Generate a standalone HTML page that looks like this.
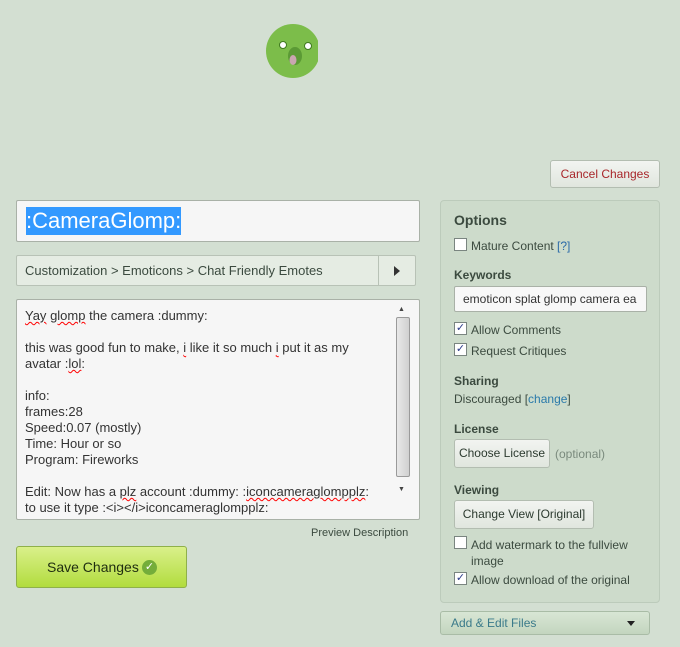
<!DOCTYPE html>
<html><head><style>
body{margin:0;width:680px;height:647px;background:#d3dfd2;font-family:"Liberation Sans",sans-serif;font-size:12px;color:#3b4a3f;position:relative;overflow:hidden}
.a{position:absolute}
.btn{position:absolute;background:linear-gradient(#f2f4f1,#e0e6de);border:1px solid #b3bdb1;border-radius:3px;font-size:12px;color:#2c3a2f;box-sizing:border-box}
.cb{position:absolute;width:11px;height:11px;border:1px solid #7a8580;background:#fff;font-size:11px;line-height:11px;text-align:center;color:#2a3a8a}
.h{position:absolute;font-weight:bold;font-size:12px;color:#3b4a3f}
.sq{text-decoration:underline wavy red;text-decoration-thickness:1px}
</style></head><body>
<svg class="a" style="left:266px;top:24px" width="52" height="54" viewBox="0 0 52 54">
<ellipse cx="27" cy="27" rx="27" ry="27" fill="#7cbd4a"/><rect x="52" y="0" width="4" height="54" fill="#d3dfd2"/>
<circle cx="17" cy="21" r="3.5" fill="#fff" stroke="#3f7a1f"/><circle cx="42" cy="22" r="3.5" fill="#fff" stroke="#3f7a1f"/>
<ellipse cx="29" cy="32" rx="7" ry="9" fill="#5b9a35"/><ellipse cx="27" cy="36" rx="3.5" ry="5" fill="#c9a6b0"/></svg>
<div class="btn" style="left:550px;top:160px;width:110px;height:28px;line-height:26px;text-align:center;color:#a8262a">Cancel Changes</div>
<div class="a" style="left:16px;top:200px;width:404px;height:42px;box-sizing:border-box;border:1px solid #a9b1a7;background:#f6f6f6;border-radius:2px"><span class="a" style="left:9px;top:6px;background:#3399ff;color:#fff;font-size:22px;line-height:28px">:CameraGlomp:</span></div>
<div class="a" style="left:16px;top:255px;width:400px;height:31px;box-sizing:border-box;border:1px solid #b8c2b6;background:#e5ece3;border-radius:2px;font-size:13px;line-height:29px;color:#3b4a3f"><span style="padding-left:8px">Customization &gt; Emoticons &gt; Chat Friendly Emotes</span><div class="a" style="right:36px;top:0;width:1px;height:29px;background:#b8c2b6"></div><div class="a" style="right:15px;top:10px;width:0;height:0;border-left:6px solid #333;border-top:5px solid transparent;border-bottom:5px solid transparent"></div></div>
<div class="a" style="left:16px;top:299px;width:404px;height:221px;box-sizing:border-box;border:1px solid #a9b1a7;background:#f6f6f6;overflow:hidden;border-radius:2px">
<div class="a" style="left:8px;top:8px;font-size:13px;line-height:16px;color:#333;white-space:pre"><span class="sq">Yay</span> <span class="sq">glomp</span> the camera :dummy:

this was good fun to make, <span class="sq">i</span> like it so much <span class="sq">i</span> put it as my
avatar :<span class="sq">lol</span>:

info:
frames:28
Speed:0.07 (mostly)
Time: Hour or so
Program: Fireworks

Edit: Now has a <span class="sq">plz</span> account :dummy: :<span class="sq">iconcameraglompplz</span>:
to use it type :&lt;i&gt;&lt;/i&gt;iconcameraglompplz:</div>
<div class="a" style="left:379px;top:17px;width:12px;height:158px;background:linear-gradient(90deg,#e8e8e8,#d0d0d0);border:1px solid #9a9a9a;border-radius:2px"></div>
<div class="a" style="left:381px;top:6px;font-size:7px;color:#444">▲</div>
<div class="a" style="left:381px;top:186px;font-size:7px;color:#444">▼</div>
</div>
<div class="a" style="left:311px;top:527px;font-size:11px;color:#3b4a3f">Preview Description</div>
<div class="a" style="left:16px;top:546px;width:171px;height:42px;box-sizing:border-box;border:1px solid #8fb04a;border-radius:3px;background:linear-gradient(#daf08a,#b2dc3e);font-size:14px;line-height:40px;color:#1f2d10"><span class="a" style="left:30px;top:0">Save Changes</span><span class="a" style="left:125px;top:13px;width:15px;height:15px;border-radius:50%;background:#74ad3a;color:#fff;font-size:11px;line-height:15px;text-align:center">✓</span></div>
<div class="a" style="left:440px;top:200px;width:220px;height:403px;box-sizing:border-box;border:1px solid #bccbbb;border-radius:4px;background:#cddbcb"></div>
<div class="h" style="left:454px;top:212px;font-size:14px">Options</div>
<div class="cb" style="left:454px;top:238px"></div><div class="a" style="left:471px;top:239px">Mature Content <span style="color:#2a6aa8">[?]</span></div>
<div class="h" style="left:454px;top:268px">Keywords</div>
<div class="a" style="left:454px;top:286px;width:193px;height:26px;box-sizing:border-box;border:1px solid #a9b1a7;background:#f8f8f8;border-radius:2px;line-height:24px;padding-left:8px;font-size:12px;color:#333;overflow:hidden;white-space:nowrap">emoticon splat glomp camera ea</div>
<div class="cb" style="left:454px;top:322px">✓</div><div class="a" style="left:471px;top:323px">Allow Comments</div>
<div class="cb" style="left:454px;top:343px">✓</div><div class="a" style="left:471px;top:344px">Request Critiques</div>
<div class="h" style="left:454px;top:374px">Sharing</div>
<div class="a" style="left:454px;top:392px">Discouraged [<span style="color:#2a7aaa">change</span>]</div>
<div class="h" style="left:454px;top:422px">License</div>
<div class="btn" style="left:454px;top:439px;width:96px;height:29px;line-height:27px;text-align:center">Choose License</div>
<div class="a" style="left:555px;top:447px;color:#7a8a7d">(optional)</div>
<div class="h" style="left:454px;top:483px">Viewing</div>
<div class="btn" style="left:454px;top:500px;width:140px;height:29px;line-height:27px;text-align:center">Change View [Original]</div>
<div class="cb" style="left:454px;top:536px"></div><div class="a" style="left:471px;top:537px;line-height:16px">Add watermark to the fullview<br>image</div>
<div class="cb" style="left:454px;top:572px">✓</div><div class="a" style="left:471px;top:573px">Allow download of the original</div>
<div class="a" style="left:440px;top:611px;width:210px;height:24px;box-sizing:border-box;border:1px solid #a9bca6;border-radius:3px;background:linear-gradient(#d8e6d5,#c3d5bf);line-height:22px;color:#3a7a8a"><span style="padding-left:10px">Add &amp; Edit Files</span><div class="a" style="right:14px;top:9px;border-top:5px solid #222;border-left:4px solid transparent;border-right:4px solid transparent"></div></div>
</body></html>
